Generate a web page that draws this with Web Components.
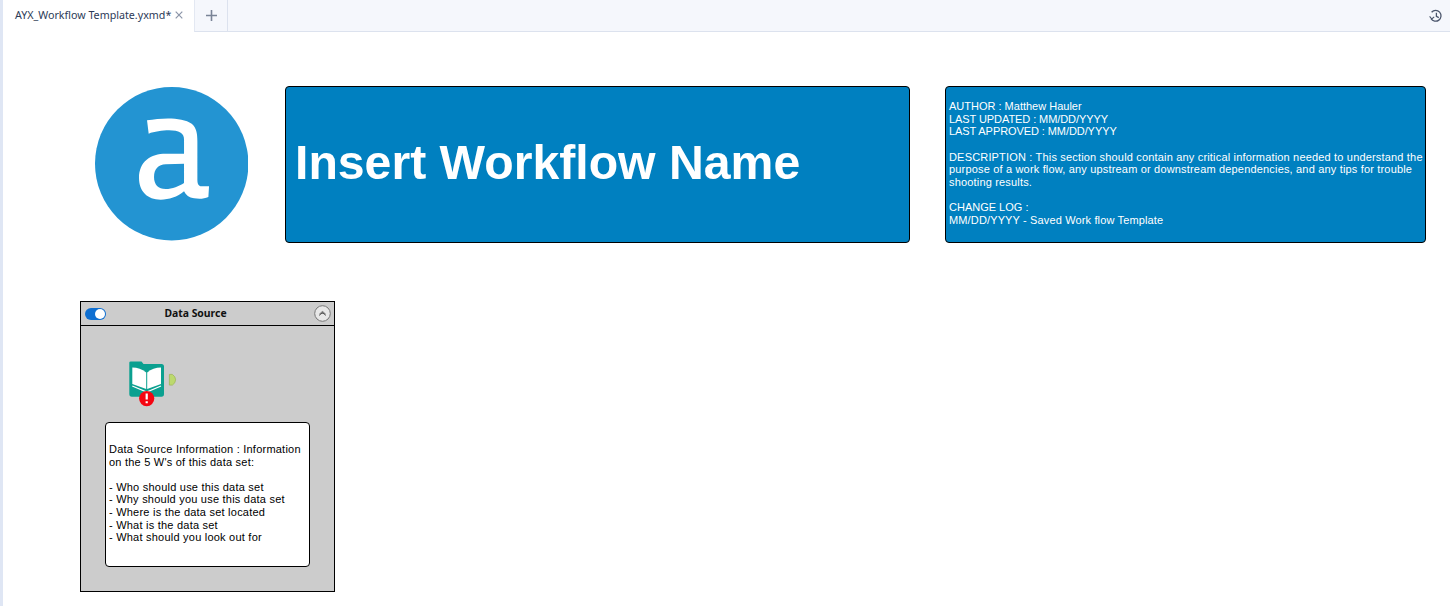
<!DOCTYPE html>
<html>
<head>
<meta charset="utf-8">
<title>AYX_Workflow Template.yxmd</title>
<style>
	html, body { margin: 0; height: 100%; overflow: hidden; background: #fff; }
	body { display: flex; flex-direction: column; box-sizing: border-box; border-left: 3px solid #dfe6f4; font-family: "Liberation Sans", Arial, sans-serif; }
</style>
</head>
<body>
<ayx-tabbar name="AYX_Workflow Template.yxmd*"></ayx-tabbar>
<ayx-canvas>
	<ayx-logo style="left:92px;top:55.300px"></ayx-logo>
	<ayx-comment tone="title" style="left:282px;top:54px;width:625px;height:157px">Insert Workflow Name</ayx-comment>
	<ayx-comment tone="blue" style="left:942px;top:54px;width:481px;height:157px">AUTHOR : Matthew Hauler
<span style="letter-spacing:-.08px">LAST UPDATED : MM/DD/YYYY
LAST APPROVED : MM/DD/YYYY</span>

<span style="letter-spacing:.175px">DESCRIPTION : This section should contain any critical information needed to understand the purpose of a work flow, any upstream or downstream dependencies, and any tips for trouble shooting results.</span>

CHANGE LOG :
<span style="letter-spacing:.14px">MM/DD/YYYY - Saved Work flow Template</span></ayx-comment>
	<ayx-container label="Data Source" style="left:77px;top:269px;width:255px;height:291px">
		<ayx-tool style="left:47px;top:34px"></ayx-tool>
		<ayx-comment tone="white" style="left:24px;top:96px;width:205px;height:145px">Data Source Information : Information on the 5 W's of this data set:

- Who should use this data set
- Why should you use this data set
- Where is the data set located
- What is the data set
- What should you look out for</ayx-comment>
	</ayx-container>
</ayx-canvas>

<script>
	window.customElements.define(
		'ayx-tabbar',
		class AyxTabbar extends HTMLElement {
			connectedCallback() {
				let shadowRoot = this.attachShadow({ mode: 'open' });
				shadowRoot.innerHTML = `
					<style>
						:host { display: flex; height: 32px; flex: none; box-sizing: border-box; font-family: "Noto Sans", sans-serif; }
						.tab {
							display: flex; align-items: center; gap: 4px; width: 191px; flex: none; padding-left: 12px;
							background: #fff; font-size: 10.7px; color: #2c3a57; padding-bottom: 2px; box-sizing: border-box;
						}
						.tab span { white-space: nowrap; }
						.tab svg { flex: none; }
						.rest { flex: 1; display: flex; background: #f5f7fc; border-bottom: 1px solid #dce2ee; border-left: 1px solid #e3e8f2; }
						.add { width: 32px; display: flex; align-items: center; justify-content: center; border-right: 1px solid #dce2ee; }
						.spacer { flex: 1; }
						.history { width: 28px; display: flex; align-items: center; justify-content: center; }
					</style>
					<div class="tab">
						<span>${this.getAttribute('name')}</span>
						<svg width="8" height="8" viewBox="0 0 8 8"><path d="M.7.7l6.6 6.6M7.3.7L.7 7.3" stroke="#8b95a8" stroke-width="1.2" fill="none"/></svg>
					</div>
					<div class="rest">
						<div class="add"><svg width="11" height="11" viewBox="0 0 11 11"><path d="M5.500 0v11M0 5.500h11" stroke="#7a8497" stroke-width="1.600" fill="none"/></svg></div>
						<div class="spacer"></div>
						<div class="history">
							<svg width="14" height="14" viewBox="0 0 14 14" fill="none" stroke="#4b566c" stroke-width="1.300">
								<path d="M2.600 3.200A5.400 5.400 0 1 1 2 9.600"/>
								<path d="M7.400 3.800v3.600l2.400 1.200"/>
								<path d="M.6 7.400l2.200 2.600 2.400-2.200" stroke-width="1.100"/>
							</svg>
						</div>
					</div>
				`;
			}
		}
	);

	window.customElements.define(
		'ayx-canvas',
		class AyxCanvas extends HTMLElement {
			constructor() {
				super();
				this.attachShadow({ mode: 'open' }).innerHTML = `
					<style>
						:host { display: block; position: relative; flex: 1; background: #fff; }
						::slotted(*) { position: absolute; }
					</style>
					<slot></slot>
				`;
			}
		}
	);

	window.customElements.define(
		'ayx-logo',
		class AyxLogo extends HTMLElement {
			constructor() {
				super();
				this.attachShadow({ mode: 'open' }).innerHTML = `
					<style>:host { display: block; width: 153.400px; height: 153.400px; } svg { display: block; }</style>
					<svg width="153.400" height="153.400" viewBox="28 22 460 460">
						<circle cx="258" cy="252" r="230" fill="#2394d2"/>
						<path fill="#fff" fill-rule="evenodd" d="M184 122C230 114 290 112 318 132C332 144 335 160 335 185L335 300C335 316 340 320 352 320L370 320L368 352C355 358 340 358 325 356C310 354 300 346 295 335C275 352 250 360 225 360C185 360 160 335 160 295C160 245 195 222 240 222L295 222L295 180C295 160 280 152 250 152C230 152 205 156 189 162ZM295 252L240 254C218 255 205 268 205 292C205 315 218 328 240 328C260 328 280 320 295 310Z"/>
					</svg>
				`;
			}
		}
	);

	window.customElements.define(
		'ayx-comment',
		class AyxComment extends HTMLElement {
			constructor() {
				super();
				this.attachShadow({ mode: 'open' }).innerHTML = `
					<style>
						:host {
							display: flex; align-items: center; box-sizing: border-box; padding: 0 0 0 3px;
							border: 1px solid #000; border-radius: 4px; overflow: hidden;
							font: 11px/12.670px "Liberation Sans", Arial, sans-serif; white-space: pre-line;
						}
						:host([tone="blue"]), :host([tone="title"]) { background: #0080c0; color: #fff; }
						:host([tone="blue"]) { padding-bottom: 2.200px; }
						:host([tone="white"]) { background: #fff; color: #000; letter-spacing: .225px; line-height: 12.570px; padding-bottom: 2.200px; }
						:host([tone="title"]) { font-weight: bold; font-size: 48.200px; line-height: 56px; padding: 0 0 5px 9px; }
					</style>
					<div><slot></slot></div>
				`;
			}
		}
	);

	window.customElements.define(
		'ayx-container',
		class AyxContainer extends HTMLElement {
			constructor() {
				super();
				this.attachShadow({ mode: 'open' }).innerHTML = `
					<style>
						:host { display: flex; flex-direction: column; box-sizing: border-box; border: 1px solid #000; background: #ccc; }
						header {
							display: flex; align-items: center; justify-content: space-between; height: 23px; flex: none;
							padding: 0 3px 0 4px; border-bottom: 1px solid #000; position: relative;
						}
						.toggle { width: 21px; height: 12px; border-radius: 6px; background: #0f6fd1; position: relative; }
						.toggle::after { content: ""; position: absolute; right: 1px; top: 1px; width: 10px; height: 10px; border-radius: 50%; background: #fff; }
						.label {
							position: absolute; left: 0; right: 24px; top: 4px; text-align: center;
							font: bold 10.400px "Noto Sans", sans-serif; color: #111; pointer-events: none;
						}
						.collapse { display: block; }
						main { flex: 1; position: relative; }
						::slotted(*) { position: absolute; }
					</style>
					<header>
						<div class="toggle"></div>
						<div class="label">${this.getAttribute('label')}</div>
						<svg class="collapse" width="17" height="17" viewBox="0 0 17 17">
							<circle cx="8.500" cy="8.500" r="7.800" fill="#e8e8e8" stroke="#777" stroke-width="1"/>
							<path d="M8.500 5.800L12 9H5Z" fill="#888"/>
							<path d="M5 10.400L8.500 7.800L12 10.400" fill="none" stroke="#555" stroke-width="1"/>
						</svg>
					</header>
					<main><slot></slot></main>
				`;
			}
		}
	);

	window.customElements.define(
		'ayx-tool',
		class AyxTool extends HTMLElement {
			constructor() {
				super();
				this.attachShadow({ mode: 'open' }).innerHTML = `
					<style>:host { display: block; width: 50px; height: 48px; } svg { display: block; }</style>
					<svg width="50" height="48" viewBox="0 0 50 48">
						<path d="M1.300 2.500Q1.300 1.500 2.800 1.500H13.500l2 2.500H33.500Q36 4 36 6.500V34Q36 36.700 33.500 36.700H3.800Q1.300 36.700 1.300 34Z" fill="#0ba090"/>
						<path d="M4.300 7.500Q12 7.500 18.200 12.500V29L4.300 24Z" fill="#fff"/>
						<path d="M33 7.500Q25 7.500 19.200 12.500V29L33 24Z" fill="#fff"/>
						<path d="M4.300 26L18.700 32L33 26" fill="none" stroke="#fff" stroke-width="1.200"/>
						<circle cx="18.700" cy="38.600" r="7.600" fill="#f40511"/>
						<path d="M18.700 33.600v5.800M18.700 41.200v2" stroke="#fff" stroke-width="2.200" fill="none"/>
						<path d="M41.400 14.400h3Q47.600 16.500 47.600 19.800Q47.600 23 44.400 25.100h-3Z" fill="#bcd96e" stroke="#a0b85a" stroke-width="0.800"/>
					</svg>
				`;
			}
		}
	);
</script>
</body>
</html>
